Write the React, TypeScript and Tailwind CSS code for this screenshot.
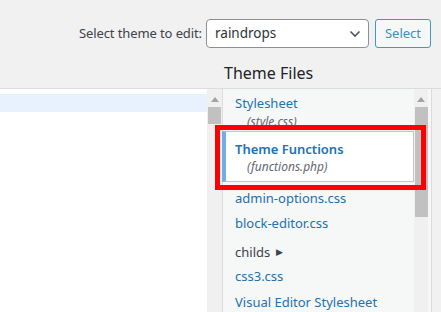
import React from "react";

const font = { fontFamily: '"Noto Sans", "Open Sans", sans-serif' };

function Chevron() {
  return (
    <svg width="12" height="8" viewBox="0 0 12 8" fill="none">
      <path d="M1.5 1.5 L6 6 L10.5 1.5" stroke="#50575e" strokeWidth="1.6" />
    </svg>
  );
}

function UpArrow() {
  return (
    <svg width="8" height="5" viewBox="0 0 8 5">
      <path d="M0 5 L4 0 L8 5 Z" fill="#a3a3a3" />
    </svg>
  );
}

export default function App() {
  return (
    <div
      className="relative w-[441px] h-[312px] bg-[#f1f1f1] overflow-hidden text-[#3c434a]"
      style={font}
    >
      <div className="flex items-center justify-end pt-[19px] pr-[10px] h-[48px]">
        <span className="text-[13px] mr-[4px] tracking-[-0.1px]">Select theme to edit:</span>
        <div className="flex items-center justify-between w-[163px] h-[29px] bg-white border border-[#8c8f94] rounded-[4px] pl-[8px] pr-[7px] text-[13.5px] text-[#2c3338]">
          <span>raindrops</span>
          <Chevron />
        </div>
        <div className="flex items-center justify-center ml-[6px] w-[56px] h-[29px] bg-[#f6f7f7] border border-[#3a9bbf] rounded-[3px] text-[13px] text-[#3a8fbe]">
          Select
        </div>
      </div>
      <div className="pl-[224px] pt-[13px] h-[40px] text-[16px] text-[#1d2327] leading-[24px]">
        Theme Files
      </div>
      <div className="flex h-[224px] border-t border-[#dcdcde]">
        <div className="w-[207px] bg-white pt-[5px]">
          <div className="h-[18px] bg-[#e8f2ff]" />
        </div>
        <div className="w-[15px] bg-[#f0f0f0] flex flex-col items-center pt-[8px]">
          <UpArrow />
          <div className="mt-[5px] w-[13px] h-[17px] bg-[#c1c1c1]" />
        </div>
        <div className="w-[210px] bg-[#f6f7f7] border-l border-r border-[#dcdcde] flex">
          <div className="flex-1 pt-[5px]">
            <div className="pl-[12px] h-[37px]">
              <div className="text-[13px] leading-[18px] text-[#2271b1]">Stylesheet</div>
              <div className="pl-[12px] mt-[2px] text-[12px] leading-[16px] italic text-[#646970]">(style.css)</div>
            </div>
            <div className="ml-[-1px] h-[51px] bg-white border border-[#c3c4c7] border-l-[4px] border-l-[#72aee6] pl-[9px] pt-[8px]">
              <div className="text-[13px] leading-[18px] font-semibold text-[#2271b1]">Theme Functions</div>
              <div className="pl-[12px] mt-[1px] text-[12px] leading-[16px] italic text-[#646970]">(functions.php)</div>
            </div>
            <div className="pl-[12px] pt-[7px] text-[13px] text-[#2271b1]">
              <div className="h-[25px] leading-[18px]">admin-options.css</div>
              <div className="h-[29px] leading-[18px]">block-editor.css</div>
              <div className="h-[24px] leading-[18px] text-[#3c434a] flex items-start">
                childs
                <span className="ml-[6px] text-[9px] leading-[18px]">▶</span>
              </div>
              <div className="h-[26px] leading-[18px]">css3.css</div>
              <div className="h-[25px] leading-[18px]">Visual Editor Stylesheet</div>
            </div>
          </div>
          <div className="w-[14px] mr-[3px] bg-[#f0f0f0] flex flex-col items-center pt-[8px]">
            <UpArrow />
            <div className="mt-[5px] w-[13px] h-[110px] bg-[#c1c1c1]" />
          </div>
        </div>
      </div>
      <div className="absolute left-[215px] top-[125px] w-[211px] h-[65px] border-[5px] border-[#ff0000]" />
    </div>
  );
}
